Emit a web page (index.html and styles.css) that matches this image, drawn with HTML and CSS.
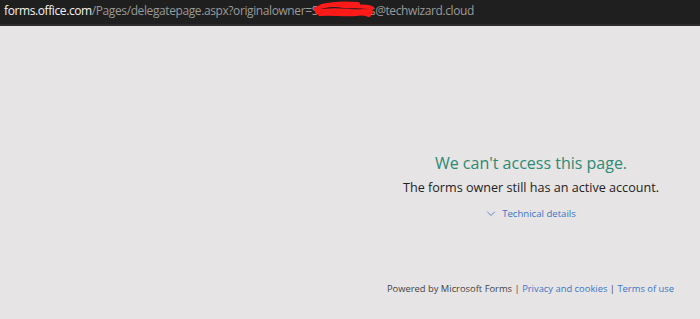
FILE: index.html
```html
<!DOCTYPE html>
<html lang="en">
<head>
<meta charset="utf-8">
<title>Microsoft Forms</title>
<link rel="stylesheet" href="styles.css">
</head>
<body>
<div class="addressbar">
  <span class="url"><span class="host">forms.office.com</span><span class="path">/Pages/delegatepage.aspx?originalowner=S</span><span class="redact"><svg class="scribble" viewBox="0 0 60 18" width="60" height="18" aria-hidden="true"><path d="M2 9 C10 5 18 4 30 6 C40 7 50 5 58 8 M3 12 C14 9 26 10 36 11 C44 12 52 10 57 12 M8 6 C20 3 32 3 44 4 M6 14 C18 13 30 15 42 14 C48 13 52 14 55 15" stroke="#ff1a1a" stroke-width="4" fill="none" stroke-linecap="round"/></svg></span><span class="path">s@techwizard.cloud</span></span>
</div>
<main class="page">
  <div class="spacer"></div>
  <section class="message">
    <h1 class="title">We can't access this page.</h1>
    <p class="subtitle">The forms owner still has an active account.</p>
    <a class="details" href="#"><svg class="chev" viewBox="0 0 12 8" width="10" height="6" aria-hidden="true"><path d="M1 1 L6 6 L11 1" stroke="#3a76c4" stroke-width="1.1" fill="none"/></svg>Technical details</a>
  </section>
</main>
<footer class="footer">
  <span>Powered by Microsoft Forms</span> | <a href="#">Privacy and cookies</a> | <a href="#">Terms of use</a>
</footer>
</body>
</html>
```
FILE: styles.css
```css
html, body {
  margin: 0;
  padding: 0;
  height: 100%;
}
body {
  background: #e6e4e4;
  font-family: "Open Sans", "Noto Sans", sans-serif;
  display: flex;
  flex-direction: column;
  overflow: hidden;
}
.addressbar {
  background: #1f1f1f;
  border-bottom: 2px solid #2c2c2c;
  display: flex;
  align-items: center;
  padding: 0 0 4px 4px;
  box-sizing: border-box;
  height: 26px;
}
.url {
  font-size: 12px;
  white-space: nowrap;
  letter-spacing: -0.4px;
}
.host { color: #f2f2f2; }
.path { color: #9a9a9a; }
.redact {
  position: relative;
  display: inline-block;
  width: 52px;
  height: 10px;
}
.scribble {
  position: absolute;
  left: -4px;
  top: -5px;
}
.page {
  flex: 1;
  display: grid;
  grid-template-columns: 362px 1fr;
  align-content: start;
  padding-top: 125px;
}
.message {
  text-align: center;
  display: flex;
  flex-direction: column;
  align-items: center;
}
.title {
  margin: 0;
  font-weight: 400;
  font-size: 16px;
  line-height: 24px;
  color: #2e8a74;
}
.subtitle {
  margin: 2px 0 0;
  font-size: 12.6px;
  line-height: 22px;
  color: #222;
}
.details {
  margin-top: 7px;
  font-size: 9.6px;
  line-height: 16px;
  color: #3a76c4;
  text-decoration: none;
  display: flex;
  align-items: center;
  gap: 6px;
}
.footer {
  text-align: right;
  padding: 0 26px 22px 0;
  font-size: 9.4px;
  line-height: 16px;
  color: #444;
}
.footer a {
  color: #3a76c4;
  text-decoration: none;
}
```
